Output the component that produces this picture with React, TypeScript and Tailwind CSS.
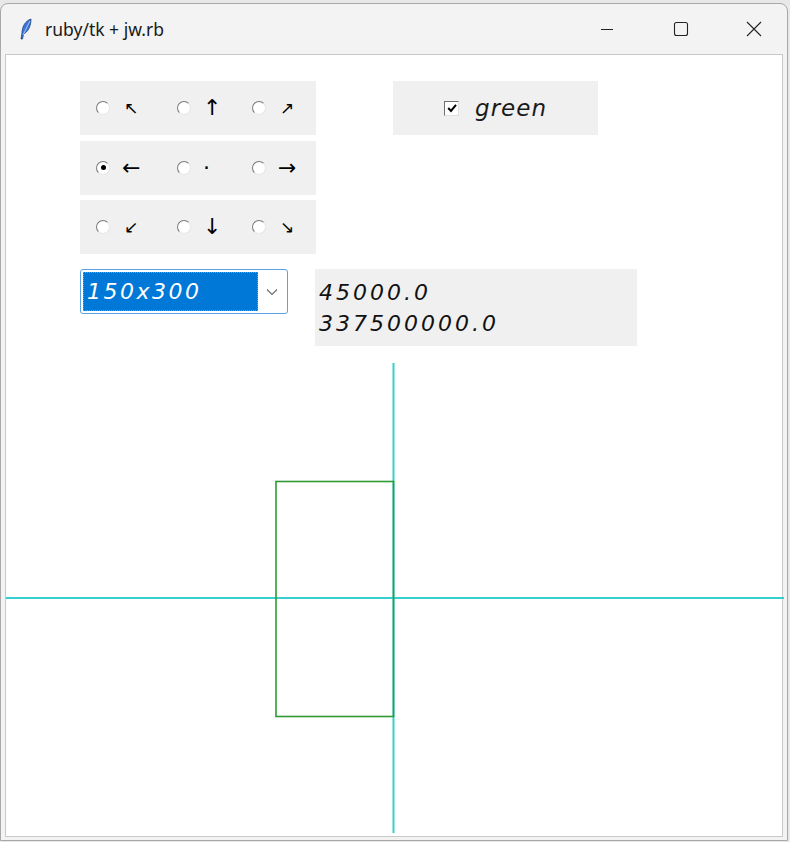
import React from 'react';

const hand = "font-['DejaVu_Sans',sans-serif] italic";

function Radio({ on }: { on?: boolean }) {
  return (
    <span className="relative inline-flex h-[14px] w-[14px] items-center justify-center rounded-full border border-t-[#7a7a7a] border-l-[#7a7a7a] border-r-[#e6e6e6] border-b-[#e6e6e6] bg-white">
      {on && <span className="h-[5px] w-[5px] rounded-full bg-black" />}
    </span>
  );
}

function RadioRow({ glyphs, checked }: { glyphs: string[]; checked?: number }) {
  const widths = ['w-[81px]', 'w-[75px]', 'w-[60px]'];
  const diag = '↖↗↙↘';
  return (
    <div className="flex h-[54px] w-[236px] items-center bg-[#f0f0f0] pl-[16px]">
      {glyphs.map((g, i) => (
        <div key={i} className={`flex items-center ${widths[i]}`}>
          <Radio on={checked === i} />
          <span
            className={`font-['DejaVu_Sans',sans-serif] leading-none text-black ${diag.includes(g) ? 'ml-[14px] text-[17px]' : 'ml-[12px] text-[22px]'}`}
          >
            {g}
          </span>
        </div>
      ))}
    </div>
  );
}

function Feather() {
  return (
    <svg width="14" height="22" viewBox="0 0 14 22">
      <path d="M12 1 C6 3 3 9 3 15 L2 21 L3.5 21 L4.5 16 C9 14 12 8 12 1 Z" fill="#3b78d8" stroke="#1d3f7a" strokeWidth="0.8" />
      <path d="M11 3 L4 17" stroke="#bcd6ff" strokeWidth="0.8" />
    </svg>
  );
}

export default function App() {
  return (
    <div className="h-[842px] w-[790px] overflow-hidden bg-[#e8e8e8] font-['Noto_Sans',sans-serif]">
      <div className="mt-[3px] flex h-[838px] w-[788px] flex-col rounded-t-[8px] border border-[#a8a8a8] bg-[#f3f3f3]">
        {/* title bar */}
        <div className="flex h-[50px] shrink-0 items-center">
          <div className="ml-[18px] flex items-center">
            <Feather />
          </div>
          <span className="ml-[12px] text-[17.5px] text-[#1a1a1a]">ruby/tk + jw.rb</span>
          <div className="ml-auto flex h-full items-center">
            <div className="flex w-[68px] justify-center">
              <svg width="14" height="14" viewBox="0 0 14 14"><path d="M1 7.5 H13" stroke="#222" strokeWidth="1" /></svg>
            </div>
            <div className="flex w-[80px] justify-center">
              <svg width="16" height="16" viewBox="0 0 16 16"><rect x="1.5" y="1.5" width="13" height="13" rx="2" fill="none" stroke="#222" strokeWidth="1.1" /></svg>
            </div>
            <div className="flex w-[66px] justify-center">
              <svg width="16" height="16" viewBox="0 0 16 16"><path d="M1 1 L15 15 M15 1 L1 15" stroke="#222" strokeWidth="1.1" /></svg>
            </div>
          </div>
        </div>

        {/* client */}
        <div className="mx-[4px] mb-[3px] flex flex-1 flex-col border border-[#c9c9c9] bg-white">
          <div className="flex pl-[74px] pt-[26px]">
            <div className="flex flex-col gap-[5.5px]">
              <RadioRow glyphs={['↖', '↑', '↗']} />
              <RadioRow glyphs={['←', '·', '→']} checked={0} />
              <RadioRow glyphs={['↙', '↓', '↘']} />
            </div>
            <div className="ml-[77px] flex h-[54px] w-[205px] items-center justify-center bg-[#f0f0f0]">
              <span className="relative flex h-[15px] w-[15px] items-center justify-center border border-t-[#6e6e6e] border-l-[#6e6e6e] border-r-[#e0e0e0] border-b-[#e0e0e0] bg-white">
                <svg width="10" height="10" viewBox="0 0 10 10"><path d="M1.2 5 L4 8 L9 1.8" fill="none" stroke="#000" strokeWidth="2" /></svg>
              </span>
              <span className={`${hand} ml-[16px] text-[23px] leading-none tracking-[1px] text-[#1a1a1a]`}>green</span>
            </div>
          </div>

          <div className="mt-[15px] flex items-start pl-[74px]">
            <div className="flex h-[45px] w-[208px] items-center rounded-[3px] border border-[#5aa2e6] bg-white p-[2px]">
              <div className="flex h-full w-[175px] items-center border border-dotted border-[#c8894a] bg-[#0078d7] pl-[3px]">
                <span className={`${hand} text-[22px] leading-none tracking-[2.5px] text-white`}>150x300</span>
              </div>
              <div className="flex flex-1 justify-center">
                <svg width="12" height="8" viewBox="0 0 12 8"><path d="M1 1.5 L6 6.5 L11 1.5" fill="none" stroke="#6a6a6a" strokeWidth="1.1" /></svg>
              </div>
            </div>
            <div className="ml-[27px] flex h-[77px] w-[322px] flex-col justify-center gap-[9px] bg-[#f0f0f0] pl-[4px] pt-[2px]">
              <span className={`${hand} text-[22px] leading-none tracking-[3px] text-[#111]`}>45000.0</span>
              <span className={`${hand} text-[22px] leading-none tracking-[3px] text-[#111]`}>337500000.0</span>
            </div>
          </div>

          <div className="mt-[17px]">
            <svg width="779" height="470" viewBox="0 0 779 470" className="block">
              <line x1="387.5" y1="0" x2="387.5" y2="470" stroke="#35cfd0" strokeWidth="2" />
              <line x1="0" y1="235" x2="778" y2="235" stroke="#35cfd0" strokeWidth="2" />
              <rect x="270" y="118.5" width="117.5" height="235" fill="none" stroke="#2f9a34" strokeWidth="1.6" />
            </svg>
          </div>
        </div>
      </div>
    </div>
  );
}
